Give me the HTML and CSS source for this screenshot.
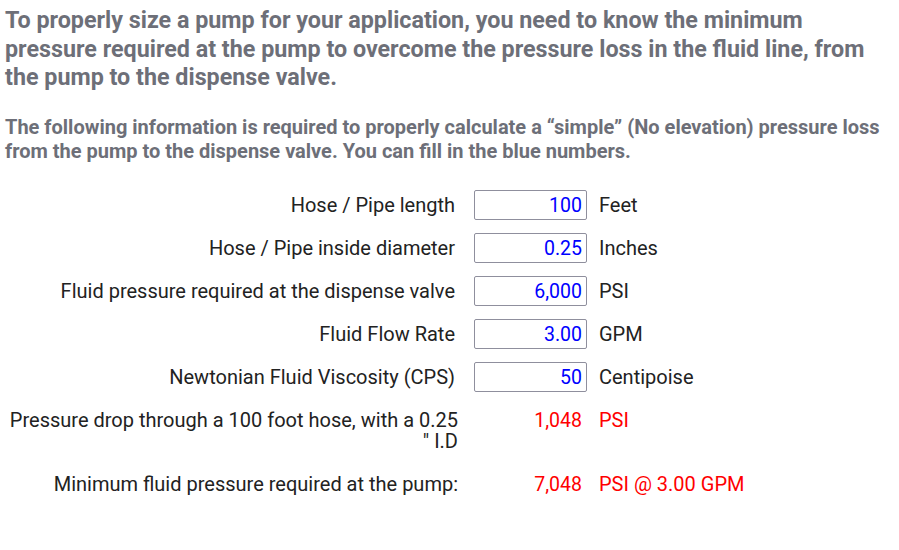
FILE: index.html
```html
<!DOCTYPE html>
<html lang="en">
<head>
<meta charset="utf-8">
<title>Pump Pressure Calculator</title>
<link rel="stylesheet" href="styles.css">
</head>
<body>
<div class="page">
  <p class="intro">To properly size a pump for your application, you need to know the minimum pressure required at the pump to overcome the pressure loss in the fluid line, from the pump to the dispense valve.</p>
  <p class="note">The following information is required to properly calculate a “simple” (No elevation) pressure loss from the pump to the dispense valve. You can fill in the blue numbers.</p>

  <div class="calc">
    <div class="label">Hose / Pipe length</div>
    <div class="field"><input class="num" type="text" value="100"></div>
    <div class="unit">Feet</div>

    <div class="label">Hose / Pipe inside diameter</div>
    <div class="field"><input class="num" type="text" value="0.25"></div>
    <div class="unit">Inches</div>

    <div class="label">Fluid pressure required at the dispense valve</div>
    <div class="field"><input class="num" type="text" value="6,000"></div>
    <div class="unit">PSI</div>

    <div class="label">Fluid Flow Rate</div>
    <div class="field"><input class="num" type="text" value="3.00"></div>
    <div class="unit">GPM</div>

    <div class="label">Newtonian Fluid Viscosity (CPS)</div>
    <div class="field"><input class="num" type="text" value="50"></div>
    <div class="unit">Centipoise</div>

    <div class="label text">Pressure drop through a 100 foot hose, with a 0.25<br>" I.D</div>
    <div class="result text">1,048</div>
    <div class="unit result-unit text">PSI</div>

    <div class="label text">Minimum fluid pressure required at the pump:</div>
    <div class="result text">7,048</div>
    <div class="unit result-unit text">PSI @ 3.00 GPM</div>
  </div>

  <p class="next">Summary</p>
</div>
</body>
</html>
```

FILE: styles.css
```css
html, body {
  margin: 0;
  padding: 0;
  background: #ffffff;
}

body {
  font-family: Roboto, "Liberation Sans", Arial, sans-serif;
  color: #222222;
}

.page {
  padding: 6px 0 0 5px;
  width: 894px;
  box-sizing: border-box;
}

.intro {
  margin: 0;
  font-size: 23.3px;
  line-height: 28.5px;
  font-weight: 700;
  color: #6d6f78;
}

.note {
  margin: 23.5px 0 0 0;
  font-size: 20px;
  line-height: 24px;
  font-weight: 700;
  color: #6d6f78;
}

.calc {
  margin-top: 20.5px;
  display: grid;
  grid-template-columns: 453px 129px auto;
  column-gap: 0;
  font-size: 20px;
  line-height: 21px;
}

.label {
  text-align: right;
  padding-right: 3px;
  display: flex;
  align-items: center;
  justify-content: flex-end;
  min-height: 43px;
  color: #222222;
  white-space: nowrap;
}

.field {
  padding-left: 16px;
  display: flex;
  align-items: center;
  min-height: 43px;
}

.unit {
  margin-left: 12px;
  display: flex;
  align-items: center;
  min-height: 43px;
  color: #222222;
  white-space: nowrap;
}

.num {
  width: 113px;
  height: 30px;
  box-sizing: border-box;
  border: 1px solid #8f8f9d;
  border-radius: 2px;
  padding: 0 4px;
  margin: 0;
  font-family: Roboto, "Liberation Sans", Arial, sans-serif;
  font-size: 19.5px;
  color: #0000ff;
  text-align: right;
  background: #ffffff;
}

.text {
  display: block;
  min-height: 0;
  padding-top: 11px;
  padding-bottom: 11px;
}

.label.text {
  padding-right: 0;
}

.result {
  padding-left: 16px;
  text-align: right;
  padding-right: 5px;
  font-size: 19.5px;
  color: #ff0000;
}

.result-unit {
  color: #ff0000;
}

.next {
  margin: 40px 0 0 3px;
  font-size: 24px;
  line-height: 28.8px;
  font-weight: 700;
  color: #1f2a44;
}
```
